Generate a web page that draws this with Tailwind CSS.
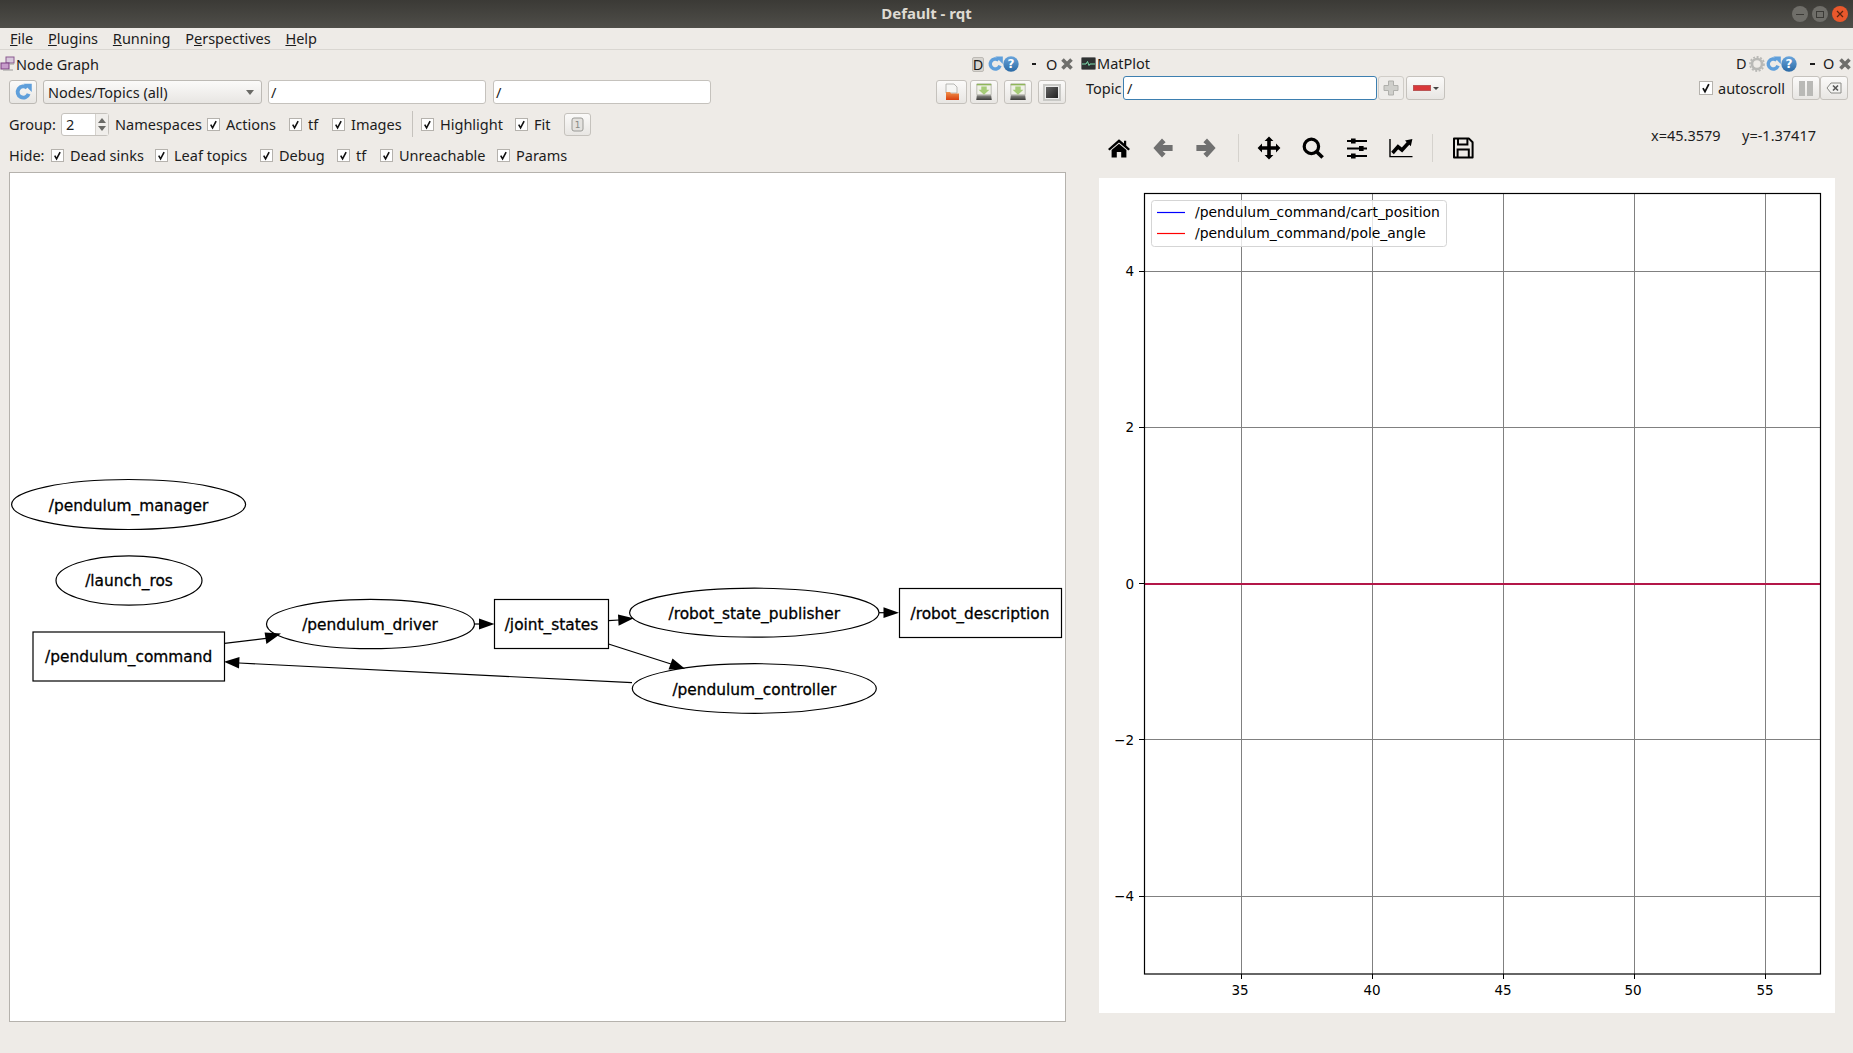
<!doctype html>
<html lang="en">
<head>
    <meta charset="UTF-8">
    <title>Default - rqt</title>
    <script src="https://cdn.jsdelivr.net/npm/@tailwindcss/browser@4"></script>
</head>
<body class="w-[1853px] h-[1053px] overflow-hidden bg-[#eeebe7] text-[#1c1c1c] text-[14.5px] leading-[17px] font-['Noto_Sans',sans-serif]">

<!-- shared icons -->
<svg class="absolute w-0 h-0">
    <defs>
        <linearGradient id="helpFill" x1="0" y1="0" x2="0" y2="1"><stop offset="0" stop-color="#6aa5dc"/><stop offset="1" stop-color="#2b6aa5"/></linearGradient>
        <linearGradient id="folderFill" x1="0" y1="0" x2="0" y2="1"><stop offset="0" stop-color="#f0904a"/><stop offset="1" stop-color="#d8400f"/></linearGradient>
        <linearGradient id="driveFill" x1="0" y1="0" x2="0" y2="1"><stop offset="0" stop-color="#8a8a86"/><stop offset="1" stop-color="#3a3a38"/></linearGradient>
        <symbol id="chk" viewBox="0 0 13 13"><path d="M3.2 6.6 L5.4 10.4 L9.6 2.4" fill="none" stroke="#111" stroke-width="1.9"/></symbol>
        <symbol id="reload" viewBox="0 0 16 16">
            <path d="M11.6 4.3 A5 5 0 1 0 13 9.6" fill="none" stroke="#5f9fdb" stroke-width="3.4"/>
            <path d="M8.4 0.6 L15.8 0.6 L15.8 8 Z" fill="#5f9fdb"/>
        </symbol>
        <symbol id="help" viewBox="0 0 16 16">
            <circle cx="8" cy="8" r="7.7" fill="url(#helpFill)"/>
            <text x="8" y="12.4" text-anchor="middle" font-family="DejaVu Sans" font-weight="bold" font-size="12" fill="#fff">?</text>
        </symbol>
        <symbol id="closex" viewBox="0 0 12 12"><path d="M1.5 1.5 L10.5 10.5 M10.5 1.5 L1.5 10.5" stroke="#6f6f6c" stroke-width="3.6"/></symbol>
        <symbol id="drive" viewBox="0 0 20 20">
            <path d="M2 1 H18 V13 H2 Z" fill="#f0f1e8" stroke="#a8a8a0" stroke-width="0.8"/>
            <path d="M2 1 H18 V2.6 H2 Z" fill="#8fb65a"/>
            <path d="M7 4 H13 V7.6 H16 L10 13 L4 7.6 H7 Z" fill="#a6cc78"/>
            <path d="M2 13.5 H18 L18.6 19 H1.4 Z" fill="url(#driveFill)"/>
        </symbol>
    </defs>
</svg>

<!-- window title bar -->
<header class="relative h-[28px] flex items-center justify-center bg-linear-to-b from-[#3b3a36] to-[#4f4e49]">
    <span class="text-[15px] font-bold text-[#dfdbd2] pb-[1px]">Default - rqt</span>
    <div class="absolute right-[5px] top-[6px] flex gap-[4px]">
        <span class="w-[16px] h-[16px] rounded-full bg-[#6f6e69] flex items-center justify-center"><span class="w-[8px] h-[1px] bg-[#3b3a36]"></span></span>
        <span class="w-[16px] h-[16px] rounded-full bg-[#6f6e69] flex items-center justify-center"><span class="w-[8px] h-[7px] border border-[#3b3a36]"></span></span>
        <span class="w-[16px] h-[16px] rounded-full bg-[#e9582c] flex items-center justify-center">
            <svg class="w-[8px] h-[8px]" viewBox="0 0 8 8"><path d="M1 1 L7 7 M7 1 L1 7" stroke="#5a2410" stroke-width="1.2"/></svg>
        </span>
    </div>
</header>

<!-- menu bar -->
<nav class="h-[22px] flex items-center gap-[14.8px] pl-[10px] pb-[1px] border-b border-[#d9d6d1]">
    <span><u>F</u>ile</span>
    <span><u>P</u>lugins</span>
    <span><u>R</u>unning</span>
    <span>P<u>e</u>rspectives</span>
    <span><u>H</u>elp</span>
</nav>

<main class="flex">
    <!-- Node Graph panel -->
    <section class="w-[1075px] shrink-0">
        <div class="h-[28px] flex items-center pr-[2px]">
            <svg class="w-[15px] h-[16px] mr-[1px]" viewBox="0 0 15 16">
                <rect x="6" y="1" width="8" height="6" fill="#d8c8dc" stroke="#8a5a90"/>
                <rect x="1" y="7" width="8" height="6" fill="#c79ccb" stroke="#7a3f82"/>
                <path d="M3 14 H13 M10 8 H14" stroke="#9a9a9a"/>
            </svg>
            <span>Node Graph</span>
            <span class="ml-auto w-[12px] h-[15px] flex items-center justify-center bg-[#d8d5d0] border border-[#bdbab5] rounded-[2px]">D</span>
            <svg class="w-[16px] h-[16px] ml-[3px]"><use href="#reload"/></svg>
            <svg class="w-[16px] h-[16px]"><use href="#help"/></svg>
            <span class="w-[4px] h-[2px] ml-[13px] bg-[#1c1c1c]"></span>
            <span class="ml-[10px] w-[11px] text-center">O</span>
            <svg class="w-[12px] h-[12px] ml-[4px]"><use href="#closex"/></svg>
        </div>

        <div class="h-[24px] mt-[2px] flex pl-[9px] pr-[9px]">
            <button class="w-[28px] h-[24px] flex items-center justify-center border border-[#bdbab5] rounded-[3px] bg-linear-to-b from-[#fbfaf9] to-[#e8e6e3]">
                <svg class="w-[18px] h-[18px]"><use href="#reload"/></svg>
            </button>
            <div class="w-[219px] ml-[6px] flex items-center pl-[4px] border border-[#bdbab5] rounded-[3px] bg-linear-to-b from-[#fbfaf9] to-[#e8e6e3]">
                <span>Nodes/Topics (all)</span>
                <span class="ml-auto mr-[7px] border-x-[4px] border-x-transparent border-t-[5px] border-t-[#6a6a66]"></span>
            </div>
            <div class="w-[218px] ml-[6px] pl-[2px] flex items-center border border-[#c5c2bd] rounded-[3px] bg-white">/</div>
            <div class="w-[218px] ml-[7px] pl-[2px] flex items-center border border-[#c5c2bd] rounded-[3px] bg-white">/</div>

            <button class="w-[31px] h-[24px] ml-auto flex items-center justify-center border border-[#c5c2bd] rounded-[3px] bg-linear-to-b from-[#fbfaf9] to-[#e8e6e3]">
                <svg class="w-[18px] h-[18px]" viewBox="0 0 18 18">
                    <path d="M3 1 H11 L14 4 V10 H3 Z" fill="#f6f6f4" stroke="#a8a8a4" stroke-width="0.8"/>
                    <path d="M3 9 H7 L8 10.4 H16 V17 H3 Z" fill="url(#folderFill)"/>
                </svg>
            </button>
            <button class="w-[28px] h-[24px] ml-[3px] flex items-center justify-center border border-[#c5c2bd] rounded-[3px] bg-linear-to-b from-[#fbfaf9] to-[#e8e6e3]">
                <svg class="w-[18px] h-[18px]"><use href="#drive"/></svg>
            </button>
            <button class="w-[28px] h-[24px] ml-[6px] flex items-center justify-center border border-[#c5c2bd] rounded-[3px] bg-linear-to-b from-[#fbfaf9] to-[#e8e6e3]">
                <svg class="w-[18px] h-[18px]"><use href="#drive"/></svg>
            </button>
            <button class="w-[28px] h-[24px] ml-[6px] flex items-center justify-center border border-[#c5c2bd] rounded-[3px] bg-linear-to-b from-[#fbfaf9] to-[#e8e6e3]">
                <span class="w-[18px] h-[17px] flex items-center justify-center border-2 border-[#c9c9c6] bg-[#eee]"><span class="w-[12px] h-[11px] bg-linear-to-br from-[#666] to-[#222]"></span></span>
            </button>
        </div>

        <div class="h-[26px] mt-[7px] flex items-center pl-[9px]">
            <span class="w-[52px]">Group:</span>
            <div class="w-[48px] h-[23px] flex border border-[#c5c2bd] rounded-[3px] bg-white">
                <span class="pl-[4px] w-[33px] self-center">2</span>
                <span class="ml-auto w-[13px] flex flex-col items-center justify-center gap-[3px] border-l border-[#d5d2cd] bg-[#f0eeeb]">
                    <span class="border-x-[4px] border-x-transparent border-b-[5px] border-b-[#6a6a66]"></span>
                    <span class="border-x-[4px] border-x-transparent border-t-[5px] border-t-[#6a6a66]"></span>
                </span>
            </div>
            <span class="w-[92px] ml-[6px]">Namespaces</span>
            <label class="w-[82px] flex items-center gap-[6px]"><span class="w-[13px] h-[13px] flex border border-[#b5b2ad] bg-white"><svg class="w-[11px] h-[11px]"><use href="#chk"/></svg></span>Actions</label>
            <label class="w-[43px] flex items-center gap-[6px]"><span class="w-[13px] h-[13px] flex border border-[#b5b2ad] bg-white"><svg class="w-[11px] h-[11px]"><use href="#chk"/></svg></span>tf</label>
            <label class="w-[80px] flex items-center gap-[6px]"><span class="w-[13px] h-[13px] flex border border-[#b5b2ad] bg-white"><svg class="w-[11px] h-[11px]"><use href="#chk"/></svg></span>Images</label>
            <span class="w-[1px] h-[26px] mr-[8px] bg-[#c5c2bd]"></span>
            <label class="w-[94px] flex items-center gap-[6px]"><span class="w-[13px] h-[13px] flex border border-[#b5b2ad] bg-white"><svg class="w-[11px] h-[11px]"><use href="#chk"/></svg></span>Highlight</label>
            <label class="w-[49px] flex items-center gap-[6px]"><span class="w-[13px] h-[13px] flex border border-[#b5b2ad] bg-white"><svg class="w-[11px] h-[11px]"><use href="#chk"/></svg></span>Fit</label>
            <button class="w-[27px] h-[23px] flex items-center justify-center border border-[#c5c2bd] rounded-[3px] bg-linear-to-b from-[#fbfaf9] to-[#e8e6e3]">
                <svg class="w-[13px] h-[15px]" viewBox="0 0 13 15">
                    <rect x="1" y="1" width="11" height="13" rx="2" fill="#e4e2df" stroke="#9a9a96"/>
                    <text x="6.5" y="11" text-anchor="middle" font-family="DejaVu Sans" font-size="9" fill="#8a8a86">1</text>
                </svg>
            </button>
        </div>

        <div class="h-[26px] mt-[5px] flex items-center pl-[9px]">
            <span class="w-[42px]">Hide:</span>
            <label class="w-[104px] flex items-center gap-[6px]"><span class="w-[13px] h-[13px] flex border border-[#b5b2ad] bg-white"><svg class="w-[11px] h-[11px]"><use href="#chk"/></svg></span>Dead sinks</label>
            <label class="w-[105px] flex items-center gap-[6px]"><span class="w-[13px] h-[13px] flex border border-[#b5b2ad] bg-white"><svg class="w-[11px] h-[11px]"><use href="#chk"/></svg></span>Leaf topics</label>
            <label class="w-[77px] flex items-center gap-[6px]"><span class="w-[13px] h-[13px] flex border border-[#b5b2ad] bg-white"><svg class="w-[11px] h-[11px]"><use href="#chk"/></svg></span>Debug</label>
            <label class="w-[43px] flex items-center gap-[6px]"><span class="w-[13px] h-[13px] flex border border-[#b5b2ad] bg-white"><svg class="w-[11px] h-[11px]"><use href="#chk"/></svg></span>tf</label>
            <label class="w-[117px] flex items-center gap-[6px]"><span class="w-[13px] h-[13px] flex border border-[#b5b2ad] bg-white"><svg class="w-[11px] h-[11px]"><use href="#chk"/></svg></span>Unreachable</label>
            <label class="flex items-center gap-[6px]"><span class="w-[13px] h-[13px] flex border border-[#b5b2ad] bg-white"><svg class="w-[11px] h-[11px]"><use href="#chk"/></svg></span>Params</label>
        </div>

        <!-- graph canvas -->
        <div class="w-[1057px] h-[850px] ml-[9px] mt-[4px] border border-[#b5b2ad] bg-white">
            <svg class="block w-full h-full" viewBox="10 173 1055 848" font-family="DejaVu Sans" font-size="15.4" text-anchor="middle" fill="#000">
                <g fill="none" stroke="#000" stroke-width="1.2">
                    <ellipse cx="128.6" cy="504.5" rx="117" ry="25"/>
                    <ellipse cx="129" cy="580.5" rx="73" ry="24.7"/>
                    <ellipse cx="370.5" cy="624" rx="104" ry="24.7"/>
                    <ellipse cx="754.3" cy="612.7" rx="124.7" ry="24.5"/>
                    <ellipse cx="754.3" cy="688.5" rx="122" ry="24.8"/>
                    <rect x="33" y="632" width="191.5" height="49"/>
                    <rect x="494.5" y="599.5" width="114" height="49"/>
                    <rect x="899.5" y="588.5" width="162" height="49"/>
                    <path d="M224.5 643.3 L266 638.4"/>
                    <path d="M474.5 624 L480 624"/>
                    <path d="M608.5 620.7 L619 620"/>
                    <path d="M879 612.7 L884 612.7"/>
                    <path d="M608.5 644 L671 664"/>
                    <path d="M632 682.7 L239 663"/>
                </g>
                <path d="M281 633.6 L266.4 644 L264.6 632.6 Z"/>
                <path d="M494.5 624 L479 618.6 L479 629.4 Z"/>
                <path d="M633.7 618.3 L618 614.6 L618.6 625.8 Z"/>
                <path d="M899 612.7 L883.5 607.3 L883.5 618.1 Z"/>
                <path d="M685 668.7 L668.5 669.5 L672.5 658.5 Z"/>
                <path d="M224 661.7 L239.5 657 L239 668.4 Z"/>
                <g stroke="#000" stroke-width="0.3">
                    <text x="128.6" y="510.5">/pendulum_manager</text>
                    <text x="129" y="586">/launch_ros</text>
                    <text x="370" y="630">/pendulum_driver</text>
                    <text x="128.7" y="662">/pendulum_command</text>
                    <text x="551.5" y="630">/joint_states</text>
                    <text x="754.3" y="618.5">/robot_state_publisher</text>
                    <text x="980" y="618.5">/robot_description</text>
                    <text x="754.3" y="694.5">/pendulum_controller</text>
                </g>
            </svg>
        </div>
    </section>

    <!-- MatPlot panel -->
    <section class="flex-1 ml-[6px]">
        <div class="h-[26px] pt-[1px] flex items-center pr-[2px]">
            <svg class="w-[15px] h-[15px] mr-[1px]" viewBox="0 0 15 15">
                <rect x="0.5" y="1.5" width="14" height="12" rx="1" fill="#2e3232" stroke="#777"/>
                <path d="M1 8 H5 L6.5 5.5 L8 9.5 L9 8 H14" fill="none" stroke="#7fe0b0"/>
            </svg>
            <span>MatPlot</span>
            <span class="ml-auto w-[10px] text-center">D</span>
            <svg class="w-[16px] h-[16px] ml-[3px]" viewBox="0 0 16 16">
                <circle cx="8" cy="8" r="5" fill="none" stroke="#b9b9b6" stroke-width="2.6"/>
                <circle cx="8" cy="8" r="7" fill="none" stroke="#b9b9b6" stroke-width="1.8" stroke-dasharray="2 1.6"/>
            </svg>
            <svg class="w-[16px] h-[16px]"><use href="#reload"/></svg>
            <svg class="w-[16px] h-[16px]"><use href="#help"/></svg>
            <span class="w-[5px] h-[2px] ml-[13px] bg-[#1c1c1c]"></span>
            <span class="ml-[8px] w-[11px] text-center">O</span>
            <svg class="w-[12px] h-[12px] ml-[5px]"><use href="#closex"/></svg>
        </div>

        <div class="h-[24px] flex items-center pl-[5px] pr-[5px]">
            <span class="w-[37px]">Topic</span>
            <div class="w-[254px] h-[24px] pl-[3px] flex items-center border border-[#3d7fb0] rounded-[3px] bg-white">/</div>
            <button class="w-[26px] h-[24px] ml-[1px] flex items-center justify-center border border-[#d0cdc8] rounded-[3px] bg-[#efedea]">
                <svg class="w-[16px] h-[16px]" viewBox="0 0 16 16"><path d="M5.5 1 H10.5 V5.5 H15 V10.5 H10.5 V15 H5.5 V10.5 H1 V5.5 H5.5 Z" fill="#cfcfcb" stroke="#b0b0ac"/></svg>
            </button>
            <button class="w-[39px] h-[24px] ml-[2px] flex items-center justify-center gap-[2px] border border-[#c5c2bd] rounded-[3px] bg-linear-to-b from-[#fbfaf9] to-[#e8e6e3]">
                <span class="w-[18px] h-[6px] bg-[#d9383a] border border-[#b55]"></span>
                <span class="border-x-[3px] border-x-transparent border-t-[3px] border-t-[#444]"></span>
            </button>
            <span class="ml-auto w-[14px] h-[14px] flex border border-[#b5b2ad] bg-white"><svg class="w-[12px] h-[12px]"><use href="#chk"/></svg></span>
            <span class="w-[68px] ml-[5px] mr-[6px]">autoscroll</span>
            <button class="w-[28px] h-[24px] flex items-center justify-center gap-[2px] border border-[#c5c2bd] rounded-[3px] bg-linear-to-b from-[#fbfaf9] to-[#e8e6e3]">
                <span class="w-[6px] h-[15px] bg-[#b9b9b6]"></span>
                <span class="w-[6px] h-[15px] bg-[#b9b9b6]"></span>
            </button>
            <button class="w-[28px] h-[24px] flex items-center justify-center border border-[#c5c2bd] rounded-[3px] bg-linear-to-b from-[#fbfaf9] to-[#e8e6e3]">
                <svg class="w-[16px] h-[12px]" viewBox="0 0 16 12">
                    <path d="M5 1 H15 V11 H5 L1 6 Z" fill="#f4f4f2" stroke="#8a8a86"/>
                    <path d="M7 3.5 L12 8.5 M12 3.5 L7 8.5" stroke="#555" stroke-width="1.6"/>
                </svg>
            </button>
        </div>

        <!-- matplotlib toolbar -->
        <div class="h-[78px] flex items-start pl-[26px] pr-[37px]">
            <svg class="w-[24px] h-[24px] mt-[36px] shrink-0" viewBox="0 0 24 24">
                <path d="M12 3.2 L17 7.6 V4.8 H19.2 V9.5 L23 13 L21.4 14.6 L12 6.4 L2.6 14.6 L1 13 Z" fill="#000"/>
                <path d="M4.6 14 L12 7.8 L19.4 14 V21.6 H14.2 V16 H9.8 V21.6 H4.6 Z" fill="#000"/>
            </svg>
            <svg class="w-[24px] h-[24px] mt-[36px] ml-[20px] shrink-0" viewBox="0 0 24 24">
                <path d="M11 2.6 L14.6 6.2 L11.6 9 H21.6 V15 H11.6 L14.6 17.8 L11 21.4 L2.4 12 Z" fill="#707070"/>
            </svg>
            <svg class="w-[24px] h-[24px] mt-[36px] ml-[19px] shrink-0" viewBox="0 0 24 24">
                <path d="M13 2.6 L9.4 6.2 L12.4 9 H2.4 V15 H12.4 L9.4 17.8 L13 21.4 L21.6 12 Z" fill="#707070"/>
            </svg>
            <span class="w-[1px] h-[28px] mt-[34px] ml-[20px] bg-[#d5d2cd] shrink-0"></span>
            <svg class="w-[24px] h-[24px] mt-[36px] ml-[18px] shrink-0" viewBox="0 0 24 24">
                <path d="M12 0.6 L16.4 5 H13.8 V10.2 H19 V7.6 L23.4 12 L19 16.4 V13.8 H13.8 V19 H16.4 L12 23.4 L7.6 19 H10.2 V13.8 H5 V16.4 L0.6 12 L5 7.6 V10.2 H10.2 V5 H7.6 Z" fill="#000"/>
            </svg>
            <svg class="w-[24px] h-[24px] mt-[36px] ml-[20px] shrink-0" viewBox="0 0 24 24">
                <circle cx="10.4" cy="10.4" r="7.2" fill="none" stroke="#000" stroke-width="3.2"/>
                <path d="M15.4 15.4 L21.6 21.6" stroke="#000" stroke-width="3.6"/>
            </svg>
            <svg class="w-[24px] h-[24px] mt-[36px] ml-[20px] shrink-0" viewBox="0 0 24 24">
                <path d="M2 5 H22 M2 12.5 H22 M2 20 H22" stroke="#000" stroke-width="1.8"/>
                <rect x="6" y="2.5" width="4.6" height="5" fill="#000"/>
                <rect x="14" y="10" width="4.6" height="5" fill="#000"/>
                <rect x="6" y="17.5" width="4.6" height="5" fill="#000"/>
            </svg>
            <svg class="w-[24px] h-[24px] mt-[36px] ml-[20px] shrink-0" viewBox="0 0 24 24">
                <path d="M1 3 V20.6 H23.5" fill="none" stroke="#000" stroke-width="1.4"/>
                <path d="M3.5 17 L9 10.8 L13 14 L19.4 7" fill="none" stroke="#000" stroke-width="3.6"/>
                <path d="M16 4.4 L23.4 3 L21.8 10.2 Z" fill="#000"/>
            </svg>
            <span class="w-[1px] h-[28px] mt-[34px] ml-[19px] bg-[#d5d2cd] shrink-0"></span>
            <svg class="w-[24px] h-[24px] mt-[36px] ml-[18px] shrink-0" viewBox="0 0 24 24">
                <path d="M3 2.6 H18 L21.6 6.2 V21.4 H3 Z" fill="none" stroke="#000" stroke-width="2" stroke-linejoin="round"/>
                <path d="M7 3 V8.6 H16.4 V3 M6.6 21 V13.4 H17.8 V21" fill="none" stroke="#000" stroke-width="2"/>
            </svg>
            <span class="ml-auto mt-[27px] w-[71px]">x=45.3579</span>
            <span class="ml-[20px] mt-[27px]">y=-1.37417</span>
        </div>

        <!-- plot -->
        <div class="w-[736px] h-[835px] ml-[18px] bg-white">
            <svg class="block w-full h-full" viewBox="1099 178 736 835" font-family="DejaVu Sans" font-size="13.5" fill="#000">
                <g stroke="#808080" stroke-width="1">
                    <path d="M1241.5 193 V974 M1372.5 193 V974 M1503.5 193 V974 M1634.5 193 V974 M1765.5 193 V974"/>
                    <path d="M1144 271.5 H1820 M1144 427.5 H1820 M1144 739.5 H1820 M1144 896.5 H1820"/>
                    <path d="M1144 583.5 H1820"/>
                </g>
                <path d="M1145 584 H1820" stroke="#b31748" stroke-width="2"/>
                <rect x="1144.5" y="193.5" width="676" height="780.5" fill="none" stroke="#000" stroke-width="1.2"/>
                <g stroke="#000" stroke-width="1">
                    <path d="M1241.5 974 V979 M1372.5 974 V979 M1503.5 974 V979 M1634.5 974 V979 M1765.5 974 V979"/>
                    <path d="M1139 271.5 H1144 M1139 427.5 H1144 M1139 583.5 H1144 M1139 739.5 H1144 M1139 896.5 H1144"/>
                </g>
                <g text-anchor="middle">
                    <text x="1240" y="995">35</text>
                    <text x="1372" y="995">40</text>
                    <text x="1503" y="995">45</text>
                    <text x="1633" y="995">50</text>
                    <text x="1765" y="995">55</text>
                </g>
                <g text-anchor="end">
                    <text x="1134" y="276">4</text>
                    <text x="1134" y="432">2</text>
                    <text x="1134" y="589">0</text>
                    <text x="1134" y="745">−2</text>
                    <text x="1134" y="901">−4</text>
                </g>
                <rect x="1151.5" y="200.5" width="295" height="46" rx="3" fill="#fff" fill-opacity="0.8" stroke="#d5d5d5"/>
                <path d="M1157 212.5 H1185" stroke="#0000ff" stroke-width="1.2"/>
                <path d="M1157 233.5 H1185" stroke="#ff0000" stroke-width="1.2"/>
                <text x="1195" y="217" font-size="13.9">/pendulum_command/cart_position</text>
                <text x="1195" y="238" font-size="13.9">/pendulum_command/pole_angle</text>
            </svg>
        </div>
    </section>
</main>
</body>
</html>
